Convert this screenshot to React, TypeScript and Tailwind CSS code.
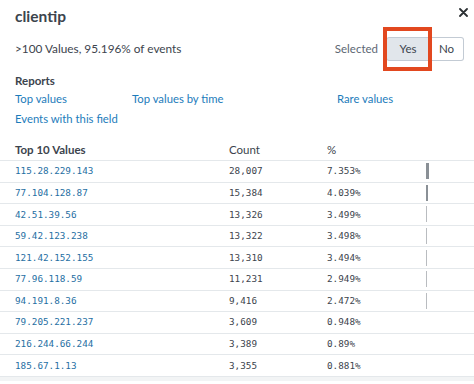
import React from 'react';

const rows = [
  { value: '115.28.229.143', count: '28,007', pct: '7.353%', n: 7.353 },
  { value: '77.104.128.87', count: '15,384', pct: '4.039%', n: 4.039 },
  { value: '42.51.39.56', count: '13,326', pct: '3.499%', n: 3.499 },
  { value: '59.42.123.238', count: '13,322', pct: '3.498%', n: 3.498 },
  { value: '121.42.152.155', count: '13,310', pct: '3.494%', n: 3.494 },
  { value: '77.96.118.59', count: '11,231', pct: '2.949%', n: 2.949 },
  { value: '94.191.8.36', count: '9,416', pct: '2.472%', n: 2.472 },
  { value: '79.205.221.237', count: '3,609', pct: '0.948%', n: 0 },
  { value: '216.244.66.244', count: '3,389', pct: '0.89%', n: 0 },
  { value: '185.67.1.13', count: '3,355', pct: '0.881%', n: 0 },
];

const mono = { fontFamily: '"DejaVu Sans Mono", Menlo, monospace' };

const App: React.FC = () => {
  return (
    <div
      className="relative w-[474px] h-[384px] bg-white overflow-hidden text-[#3c444d]"
      style={{ fontFamily: 'Lato, "Noto Sans", sans-serif' }}
    >
      <button className="absolute top-[7px] right-[5px] w-[11px] h-[11px] flex items-center justify-center">
        <svg width="9" height="9" viewBox="0 0 9 9">
          <path d="M1 1L8 8M8 1L1 8" stroke="#2b3033" strokeWidth="1.8" strokeLinecap="round" />
        </svg>
      </button>

      <div className="px-[15px] pt-[6px]">
        <h2 className="text-[15.5px] leading-[20px] font-bold">clientip</h2>

        <div className="mt-[11px] flex items-center justify-between h-[24px]">
          <span className="text-[11.8px]">&gt;100 Values, 95.196% of events</span>
          <div className="flex items-center mr-[-5px]">
            <span className="text-[11.5px] text-[#5c6773] mr-[8px]">Selected</span>
            <div className="relative flex">
              <button className="w-[44px] h-[24px] text-[11.5px] bg-[#e1e6eb] border border-[#c3cbd4] rounded-l-[3px]">
                Yes
              </button>
              <button className="w-[34px] h-[24px] text-[11.5px] bg-white border border-l-0 border-[#c3cbd4] rounded-r-[3px]">
                No
              </button>
              <div className="absolute left-[-3px] top-[-10px] w-[49px] h-[44px] border-[4px] border-[#e2481f]" />
            </div>
          </div>
        </div>

        <div className="mt-[12px] text-[11.5px] leading-[16px] font-bold">Reports</div>
        <div className="mt-[2px] grid grid-cols-[117px_205px_1fr] gap-y-[4px] text-[11.3px] leading-[16px] text-[#1c7cbb]">
          <a>Top values</a>
          <a>Top values by time</a>
          <a>Rare values</a>
          <a className="whitespace-nowrap">Events with this field</a>
        </div>
      </div>

      <div className="mt-[12px]">
        <div className="grid grid-cols-[214px_98px_99px_1fr] items-center h-[22px] px-[15px] border-b border-[#e4e8eb] text-[11.5px]">
          <span className="font-bold">Top 10 Values</span>
          <span>Count</span>
          <span>%</span>
          <span />
        </div>
        {rows.map((r) => (
          <div
            key={r.value}
            className="grid grid-cols-[214px_98px_99px_1fr] items-center h-[21.6px] px-[15px] border-b border-[#e4e8eb] text-[9.3px]"
            style={mono}
          >
            <span className="text-[#1f6fa3]">{r.value}</span>
            <span>{r.count}</span>
            <span>{r.pct}</span>
            <span className="flex items-center h-full">
              {r.n > 0 && (
                <span
                  className="block h-[16px] bg-[#8a9096]"
                  style={{ width: `${Math.max(1, r.n * 0.42)}px`, opacity: r.n > 4 ? 1 : 0.6 }}
                />
              )}
            </span>
          </div>
        ))}
        <div className="h-[4px] bg-[#f2f4f5]" />
      </div>
    </div>
  );
};

export default App;
